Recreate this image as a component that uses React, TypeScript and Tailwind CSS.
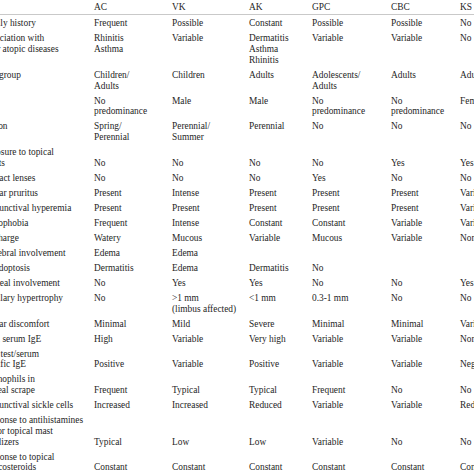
type Row = { label: string[]; cells: string[][]; bottom?: boolean }

const rows: Row[] = [
  { label: ["Family history"], cells: [["Frequent"], ["Possible"], ["Constant"], ["Possible"], ["Possible"], ["No"]] },
  {
    label: ["Association with", "other atopic diseases"],
    cells: [["Rhinitis", "Asthma"], ["Variable"], ["Dermatitis", "Asthma", "Rhinitis"], ["Variable"], ["Variable"], ["No"]],
  },
  {
    label: ["Age group"],
    cells: [["Children/", "Adults"], ["Children"], ["Adults"], ["Adolescents/", "Adults"], ["Adults"], ["Adults"]],
  },
  {
    label: ["Sex"],
    cells: [["No", "predominance"], ["Male"], ["Male"], ["No", "predominance"], ["No", "predominance"], ["Female"]],
  },
  {
    label: ["Season"],
    cells: [["Spring/", "Perennial"], ["Perennial/", "Summer"], ["Perennial"], ["No"], ["No"], ["No"]],
  },
  { label: ["Exposure to topical", "agents"], bottom: true, cells: [["No"], ["No"], ["No"], ["No"], ["Yes"], ["Yes*"]] },
  { label: ["Contact lenses"], cells: [["No"], ["No"], ["No"], ["Yes"], ["No"], ["No"]] },
  { label: ["Ocular pruritus"], cells: [["Present"], ["Intense"], ["Present"], ["Present"], ["Present"], ["Variable"]] },
  { label: ["Conjunctival hyperemia"], cells: [["Present"], ["Present"], ["Present"], ["Present"], ["Present"], ["Variable"]] },
  { label: ["Photophobia"], cells: [["Frequent"], ["Intense"], ["Constant"], ["Constant"], ["Variable"], ["Variable"]] },
  { label: ["Discharge"], cells: [["Watery"], ["Mucous"], ["Variable"], ["Mucous"], ["Variable"], ["None"]] },
  { label: ["Palpebral involvement"], cells: [["Edema"], ["Edema"], [], [], [], []] },
  { label: ["Pseudoptosis"], cells: [["Dermatitis"], ["Edema"], ["Dermatitis"], ["No"], [], []] },
  { label: ["Corneal involvement"], cells: [["No"], ["Yes"], ["Yes"], ["No"], ["No"], ["Yes*"]] },
  {
    label: ["Papillary hypertrophy"],
    cells: [["No"], [">1 mm", "(limbus affected)"], ["<1 mm"], ["0.3-1 mm"], ["No"], ["No"]],
  },
  { label: ["Ocular discomfort"], cells: [["Minimal"], ["Mild"], ["Severe"], ["Minimal"], ["Minimal"], ["Variable"]] },
  { label: ["Total serum IgE"], cells: [["High"], ["Variable"], ["Very high"], ["Variable"], ["Variable"], ["Normal"]] },
  {
    label: ["Skin test/serum", "specific IgE"],
    bottom: true,
    cells: [["Positive"], ["Variable"], ["Positive"], ["Variable"], ["Variable"], ["Negative"]],
  },
  {
    label: ["Eosinophils in", "corneal scrape"],
    bottom: true,
    cells: [["Frequent"], ["Typical"], ["Typical"], ["Frequent"], ["No"], ["No"]],
  },
  {
    label: ["Conjunctival sickle cells"],
    cells: [["Increased"], ["Increased"], ["Reduced"], ["Variable"], ["Variable"], ["Reduced"]],
  },
  {
    label: ["Response to antihistamines", "and/or topical mast", "stabilizers"],
    bottom: true,
    cells: [["Typical"], ["Low"], ["Low"], ["Variable"], ["No"], ["No"]],
  },
  {
    label: ["Response to topical", "corticosteroids"],
    bottom: true,
    cells: [["Constant"], ["Constant"], ["Constant"], ["Constant"], ["Constant"], ["Constant"]],
  },
]

const heads = ["AC", "VK", "AK", "GPC", "CBC", "KS"]

const Lines = ({ lines }: { lines: string[] }) => (
  <>
    {lines.map((l, i) => (
      <span key={i} className="block">
        {l}
      </span>
    ))}
  </>
)

export default function App() {
  return (
    <div className="w-[474px] h-[474px] overflow-hidden bg-white text-[#262626] font-['Liberation_Serif','Times_New_Roman',serif] text-[9.4px] leading-[10.75px]">
      <table className="table-fixed w-[540px] -ml-[19px]">
        <colgroup>
          <col className="w-[113px]" />
          <col className="w-[78px]" />
          <col className="w-[77px]" />
          <col className="w-[63px]" />
          <col className="w-[79px]" />
          <col className="w-[69px]" />
          <col className="w-[61px]" />
        </colgroup>
        <thead>
          <tr className="border-b border-[#c9c9c9]">
            <th className="h-[14px] pt-[1.5px] pb-[1.75px] font-normal text-left"></th>
            {heads.map((h) => (
              <th key={h} className="h-[14px] pt-[1.5px] pb-[1.75px] font-normal text-left whitespace-nowrap">
                {h}
              </th>
            ))}
          </tr>
        </thead>
        <tbody>
          {rows.map((r, i) => (
            <tr key={i} className={r.bottom ? "align-bottom" : "align-top"}>
              <td className="pt-[3.25px] pb-[1px] text-left whitespace-nowrap">
                <Lines lines={r.label} />
              </td>
              {r.cells.map((c, j) => (
                <td key={j} className="pt-[3.25px] pb-[1px] text-left whitespace-nowrap">
                  <Lines lines={c} />
                </td>
              ))}
            </tr>
          ))}
        </tbody>
      </table>
    </div>
  )
}
